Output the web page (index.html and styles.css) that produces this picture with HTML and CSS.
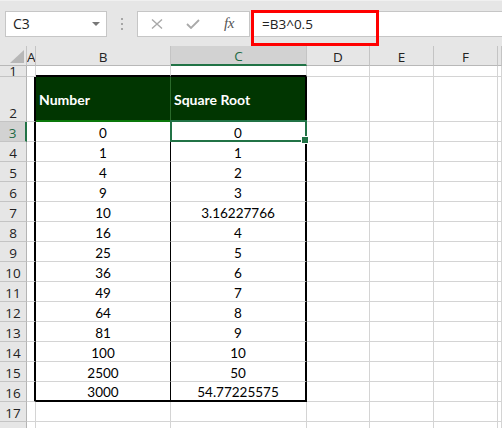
FILE: index.html
```html
<!DOCTYPE html>
<html lang="en">

<head>
  <meta charset="UTF-8">
  <meta name="viewport" content="width=device-width, initial-scale=1.0">
  <title>Square Root</title>
  <link rel="stylesheet" href="styles.css">
</head>

<body>
  <div class="bar">
    <div class="namebox">
      <span>C3</span>
      <span class="caret"></span>
    </div>
    <div class="grip"><i></i><i></i><i></i></div>
    <div class="fxbox">
      <svg class="ico" width="12" height="10" viewBox="0 0 12 10">
        <path d="M1 0.5 L11 9.5 M11 0.5 L1 9.5" stroke="#a9a9a9" stroke-width="1.4" fill="none" />
      </svg>
      <svg class="ico" width="14" height="10" viewBox="0 0 14 10">
        <path d="M1 5 L5 9 L13 1" stroke="#a9a9a9" stroke-width="1.8" fill="none" />
      </svg>
      <span class="fx">fx</span>
    </div>
    <div class="formula">
      <span class="hl">=B3^0.5</span>
    </div>
  </div>

  <table class="sheet">
    <colgroup>
      <col class="w-rh">
      <col class="w-a">
      <col class="w-b">
      <col class="w-c">
      <col class="w-d">
      <col class="w-e">
      <col class="w-f">
      <col>
    </colgroup>
    <tr class="r-head">
      <td class="ch corner"><span class="tri"></span></td>
      <td class="ch">A</td>
      <td class="ch">B</td>
      <td class="ch on">C</td>
      <td class="ch">D</td>
      <td class="ch">E</td>
      <td class="ch">F</td>
      <td class="ch"></td>
    </tr>
    <tr class="r1">
      <td class="rh"><span>1</span></td>
      <td></td><td class="top"></td><td class="top"></td><td></td><td></td><td></td><td></td>
    </tr>
    <tr class="r2">
      <td class="rh">2</td>
      <td class="edge"></td>
      <td class="hd hd-b">Number</td>
      <td class="hd hd-c">Square Root</td>
      <td></td><td></td><td></td><td></td>
    </tr>
    <tr>
      <td class="rh on">3</td><td class="edge"></td>
      <td class="b">0</td><td class="c sel">0</td>
      <td></td><td></td><td></td><td></td>
    </tr>
    <tr>
      <td class="rh">4</td><td class="edge"></td>
      <td class="b">1</td><td class="c">1</td>
      <td></td><td></td><td></td><td></td>
    </tr>
    <tr>
      <td class="rh">5</td><td class="edge"></td>
      <td class="b">4</td><td class="c">2</td>
      <td></td><td></td><td></td><td></td>
    </tr>
    <tr>
      <td class="rh">6</td><td class="edge"></td>
      <td class="b">9</td><td class="c">3</td>
      <td></td><td></td><td></td><td></td>
    </tr>
    <tr>
      <td class="rh">7</td><td class="edge"></td>
      <td class="b">10</td><td class="c">3.16227766</td>
      <td></td><td></td><td></td><td></td>
    </tr>
    <tr>
      <td class="rh">8</td><td class="edge"></td>
      <td class="b">16</td><td class="c">4</td>
      <td></td><td></td><td></td><td></td>
    </tr>
    <tr>
      <td class="rh">9</td><td class="edge"></td>
      <td class="b">25</td><td class="c">5</td>
      <td></td><td></td><td></td><td></td>
    </tr>
    <tr>
      <td class="rh">10</td><td class="edge"></td>
      <td class="b">36</td><td class="c">6</td>
      <td></td><td></td><td></td><td></td>
    </tr>
    <tr>
      <td class="rh">11</td><td class="edge"></td>
      <td class="b">49</td><td class="c">7</td>
      <td></td><td></td><td></td><td></td>
    </tr>
    <tr>
      <td class="rh">12</td><td class="edge"></td>
      <td class="b">64</td><td class="c">8</td>
      <td></td><td></td><td></td><td></td>
    </tr>
    <tr>
      <td class="rh">13</td><td class="edge"></td>
      <td class="b">81</td><td class="c">9</td>
      <td></td><td></td><td></td><td></td>
    </tr>
    <tr>
      <td class="rh">14</td><td class="edge"></td>
      <td class="b">100</td><td class="c">10</td>
      <td></td><td></td><td></td><td></td>
    </tr>
    <tr>
      <td class="rh">15</td><td class="edge"></td>
      <td class="b">2500</td><td class="c">50</td>
      <td></td><td></td><td></td><td></td>
    </tr>
    <tr>
      <td class="rh">16</td><td class="edge"></td>
      <td class="b last">3000</td><td class="c last">54.77225575</td>
      <td></td><td></td><td></td><td></td>
    </tr>
    <tr>
      <td class="rh">17</td>
      <td></td><td></td><td></td><td></td><td></td><td></td><td></td>
    </tr>
    <tr>
      <td class="rh"></td>
      <td></td><td></td><td></td><td></td><td></td><td></td><td></td>
    </tr>
  </table>
</body>

</html>
```

FILE: styles.css
```css
* {
  margin: 0;
  padding: 0;
  box-sizing: border-box;
}

body {
  width: 502px;
  height: 428px;
  overflow: hidden;
  background: #fff;
  font-family: "Open Sans", "Noto Sans", sans-serif;
  color: #222;
}

/* formula bar */
.bar {
  display: flex;
  align-items: center;
  height: 46px;
  padding: 0 0 0 5px;
  background: #e6e6e6;
  border-top: 1px solid #f0f0f0;
}

.namebox {
  display: flex;
  align-items: center;
  justify-content: space-between;
  width: 102px;
  height: 26px;
  padding: 0 6px 0 7px;
  background: #fff;
  border: 1px solid #c6c6c6;
  font-size: 14px;
}

.caret {
  width: 0;
  height: 0;
  border-left: 4px solid transparent;
  border-right: 4px solid transparent;
  border-top: 4px solid #777;
}

.grip {
  display: flex;
  flex-direction: column;
  gap: 3px;
  width: 30px;
  align-items: center;
}

.grip i {
  width: 2px;
  height: 2px;
  background: #a6a6a6;
}

.fxbox {
  display: flex;
  align-items: center;
  width: 113px;
  height: 26px;
  padding-left: 13px;
  background: #fff;
  border: 1px solid #c6c6c6;
}

.ico {
  display: block;
}

.ico + .ico {
  margin-left: 23px;
}

.fx {
  margin-left: 24px;
  font-family: "Liberation Serif", "DejaVu Serif", serif;
  font-style: italic;
  font-size: 15px;
  color: #555;
  letter-spacing: -0.5px;
}

.formula {
  flex: 1;
  display: flex;
  align-items: center;
  height: 26px;
  margin-left: 1px;
  background: #fff;
  border: 1px solid #c6c6c6;
  border-right: 0;
  position: relative;
  font-size: 13.5px;
}

.hl {
  padding-left: 10px;
}

/* the red box is drawn over the input */
.formula::after {
  content: '';
  position: absolute;
  left: -1px;
  top: -2px;
  width: 122px;
  height: 30px;
  border: 3px solid #f00;
}

/* grid */
.sheet {
  table-layout: fixed;
  width: 502px;
  border-collapse: separate;
  border-spacing: 0;
  font-family: "Lato", "Noto Sans", sans-serif;
  font-size: 13.5px;
  color: #000;
}

.w-rh { width: 27px; }
.w-a { width: 9px; }
.w-b { width: 135px; }
.w-c { width: 136px; }
.w-d { width: 63px; }
.w-e { width: 64px; }
.w-f { width: 64px; }

.sheet tr {
  height: 20px;
}

.sheet td {
  border-right: 1px solid #d4d4d4;
  border-bottom: 1px solid #d4d4d4;
  text-align: center;
  white-space: nowrap;
  overflow: hidden;
  padding-top: 2px;
  line-height: 16px;
}

.sheet .r-head { height: 20px; }
.sheet .r1 { height: 11px; }
.sheet .r2 { height: 45px; }

.sheet .ch {
  background: #e6e6e6;
  font-family: "Open Sans", "Noto Sans", sans-serif;
  font-size: 13.5px;
  color: #222;
  border-right-color: #c4c4c4;
  border-bottom-color: #b8b8b8;
}

.sheet .ch.on {
  background: #d2d2d2;
  color: #1f6b45;
  border-bottom: 2px solid #217346;
}

.corner {
  position: relative;
}

.tri {
  position: absolute;
  right: 2px;
  bottom: 2px;
  width: 0;
  height: 0;
  border-left: 14px solid transparent;
  border-bottom: 13px solid #b7b7b7;
}

.sheet .rh {
  background: #e6e6e6;
  font-family: "Open Sans", "Noto Sans", sans-serif;
  font-size: 13.5px;
  color: #222;
  border-right-color: #b4b4b4;
  border-bottom-color: #c4c4c4;
  vertical-align: bottom;
}

.sheet .r1 .rh {
  line-height: 10px;
  vertical-align: top;
  padding-top: 0;
}

.r1 .rh span {
  display: block;
  height: 10px;
  overflow: hidden;
}

.sheet .rh.on {
  background: #d2d2d2;
  color: #1f6b45;
  border-right: 2px solid #217346;
}

/* table outline */
.sheet .top {
  border-bottom: 2px solid #000;
}

.sheet .edge {
  border-right: 2px solid #000;
}

.sheet .hd {
  background: #013601;
  color: #fff;
  font-weight: bold;
  font-size: 14px;
  text-align: left;
  padding-left: 3px;
  padding-top: 3px;
}

.sheet .hd-b {
  border-right-color: #2a6a2a;
  border-bottom: 2px solid #0a780a;
}

.sheet .hd-c {
  border-right: 2px solid #000;
  border-bottom: 2px solid #217346;
}

.sheet .b {
  border-right: 1px solid #000;
}

.sheet .c {
  border-right: 2px solid #000;
}

.sheet .last {
  border-bottom: 2px solid #000;
}

/* active cell */
.sheet .sel {
  position: relative;
  overflow: visible;
}

.sel::after {
  content: '';
  position: absolute;
  left: -1px;
  top: -2px;
  right: -2px;
  bottom: -1px;
  border: 2px solid #217346;
}

.sel::before {
  content: '';
  position: absolute;
  right: -4px;
  bottom: -3px;
  width: 6px;
  height: 6px;
  background: #217346;
  border: 1px solid #fff;
  z-index: 1;
}
```
